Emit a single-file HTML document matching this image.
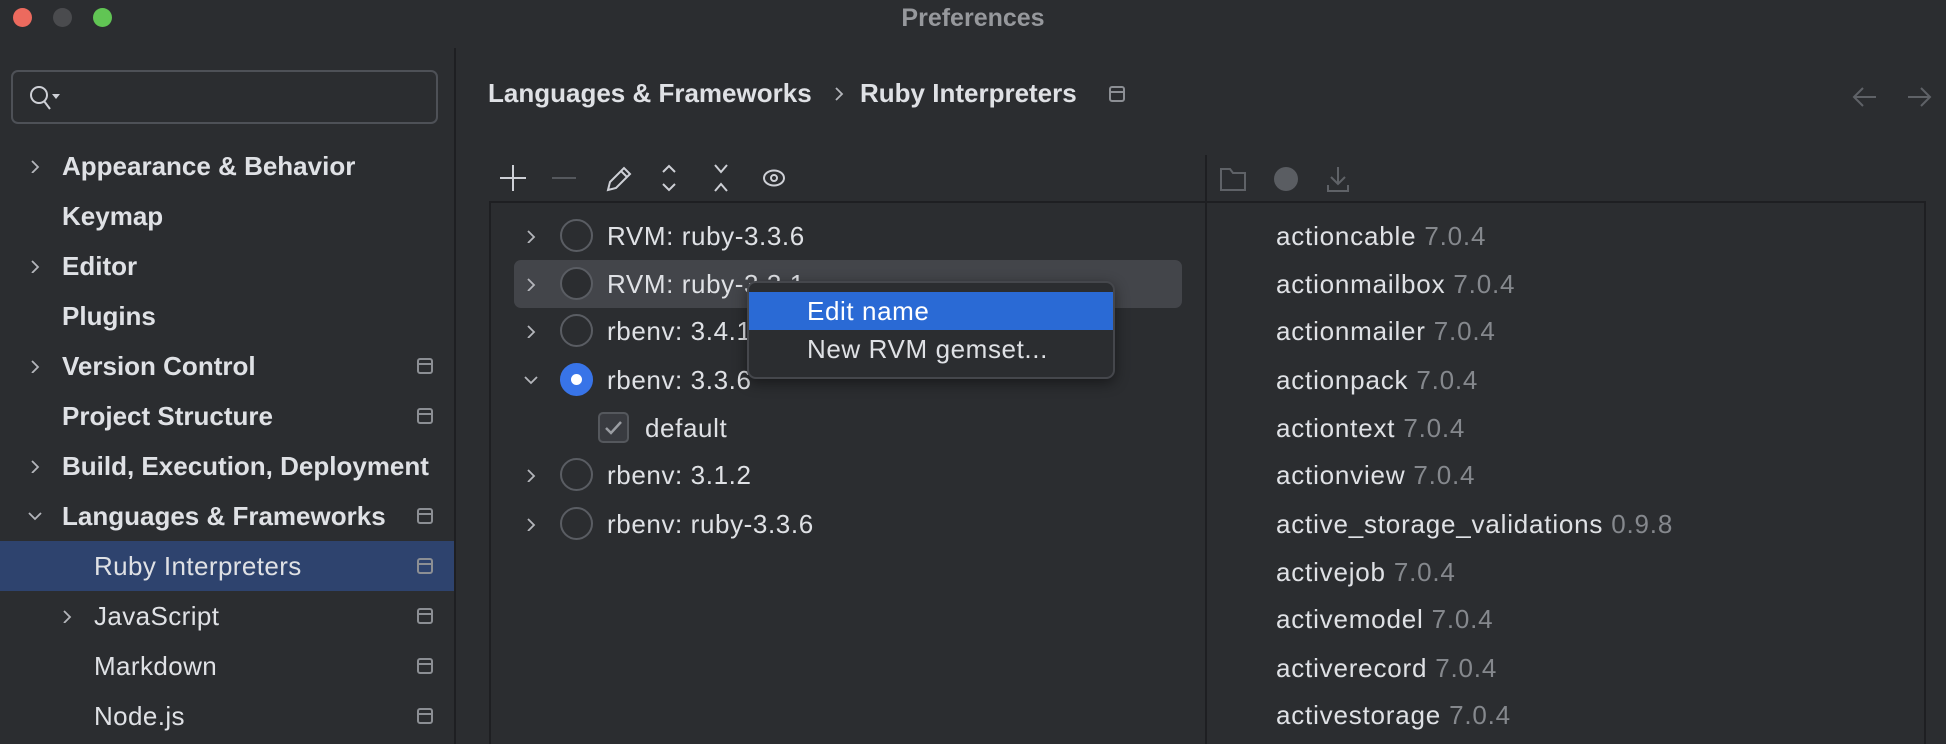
<!DOCTYPE html>
<html><head><meta charset="utf-8"><style>
*{margin:0;padding:0;box-sizing:border-box}
body{width:1946px;height:744px;background:#2b2d30;overflow:hidden;position:relative;font-family:"Liberation Sans",sans-serif;color:#dfe1e5}
.a{position:absolute}
.tl{width:19px;height:19px;border-radius:50%;top:8px}
.side{font-weight:bold;font-size:26px;line-height:50px;height:50px;left:0;width:454px}
.side span{position:absolute;left:62px;white-space:nowrap}
.side.in span{left:94px;font-weight:normal;letter-spacing:0.4px}
.chev{position:absolute;width:14px;height:14px}
.cfg{position:absolute;left:417px;top:17px;width:16px;height:16px;border:2px solid #8c8f94;border-radius:3px}
.cfg:after{content:"";position:absolute;left:0;right:0;top:3px;border-top:2px solid #8c8f94}
.row{font-size:26px;height:48px;line-height:48px;white-space:nowrap;letter-spacing:0.6px}
.circ{position:absolute;width:33px;height:33px;border-radius:50%;border:2px solid #5a5d63;top:7px}
.gem{left:1276px;font-size:26px;line-height:48px;height:48px;white-space:nowrap;letter-spacing:0.8px}
.gem i{font-style:normal;color:#85888d}
</style></head><body>
<div class="a tl" style="left:13px;background:#ec6a5e"></div>
<div class="a tl" style="left:53px;background:#4a4b4e"></div>
<div class="a tl" style="left:93px;background:#61c554"></div>
<div class="a" style="left:0;width:1946px;top:4px;text-align:center;font-weight:bold;font-size:25px;color:#96989c">Preferences</div>

<div class="a" style="left:454px;top:48px;width:2px;height:696px;background:#1e1f22"></div>
<div class="a" style="left:11px;top:70px;width:427px;height:54px;border:2px solid #4e5157;border-radius:7px"></div>
<svg class="a" style="left:28px;top:84px" width="36" height="28"><circle cx="11" cy="11" r="8" fill="none" stroke="#ced0d6" stroke-width="2"/><line x1="16" y1="17" x2="22" y2="25" stroke="#ced0d6" stroke-width="2"/><path d="M24 10h8l-4 5z" fill="#ced0d6"/></svg>

<div class="a" style="left:0;top:541px;width:454px;height:50px;background:#2e436e"></div>
<svg width="0" height="0"><defs><path id="cr" d="M4 2l6 6-6 6" fill="none" stroke="#b4b6bb" stroke-width="1.8"/><path id="cd" d="M1 4l6 6 6-6" fill="none" stroke="#b4b6bb" stroke-width="1.8"/></defs></svg>

<div class="a side" style="top:141px"><svg class="chev" style="left:28px;top:18px"><use href="#cr"/></svg><span>Appearance &amp; Behavior</span></div>
<div class="a side" style="top:191px"><span>Keymap</span></div>
<div class="a side" style="top:241px"><svg class="chev" style="left:28px;top:18px"><use href="#cr"/></svg><span>Editor</span></div>
<div class="a side" style="top:291px"><span>Plugins</span></div>
<div class="a side" style="top:341px"><svg class="chev" style="left:28px;top:18px"><use href="#cr"/></svg><span>Version Control</span><div class="cfg"></div></div>
<div class="a side" style="top:391px"><span>Project Structure</span><div class="cfg"></div></div>
<div class="a side" style="top:441px"><svg class="chev" style="left:28px;top:18px"><use href="#cr"/></svg><span>Build, Execution, Deployment</span></div>
<div class="a side" style="top:491px"><svg class="chev" style="left:28px;top:18px"><use href="#cd"/></svg><span>Languages &amp; Frameworks</span><div class="cfg"></div></div>
<div class="a side in" style="top:541px"><span>Ruby Interpreters</span><div class="cfg"></div></div>
<div class="a side in" style="top:591px"><svg class="chev" style="left:60px;top:18px"><use href="#cr"/></svg><span>JavaScript</span><div class="cfg"></div></div>
<div class="a side in" style="top:641px"><span>Markdown</span><div class="cfg"></div></div>
<div class="a side in" style="top:691px"><span>Node.js</span><div class="cfg"></div></div>

<div class="a" style="left:488px;top:78px;font-weight:bold;font-size:26px;white-space:nowrap">Languages &amp; Frameworks</div>
<svg class="a" style="left:832px;top:86px" width="14" height="16"><path d="M4 2l6 6-6 6" fill="none" stroke="#b4b6bb" stroke-width="1.8"/></svg>
<div class="a" style="left:860px;top:78px;font-weight:bold;font-size:26px;white-space:nowrap">Ruby Interpreters</div>
<div class="a" style="left:1109px;top:86px;width:16px;height:16px;border:2px solid #8c8f94;border-radius:3px"><div style="border-top:2px solid #8c8f94;margin-top:3px"></div></div>
<svg class="a" style="left:1852px;top:86px" width="80" height="22" fill="none" stroke="#5f6267" stroke-width="2"><path d="M2 11h22M11 2l-9 9 9 9"/><path d="M56 11h22M69 2l9 9-9 9"/></svg>

<svg class="a" style="left:496px;top:160px" width="300" height="36" fill="none" stroke="#ced0d6" stroke-width="2">
<path d="M17 5v26M4 18h26"/>
<path d="M56 18h24" stroke="#55585d"/>
<path d="M112 30l2-8 14-14 6 6-14 14z M125 11l6 6"/>
<path d="M167 12l6-6 6 6M167 24l6 6 6-6"/>
<path d="M219 5l6 7 6-7M219 31l6-7 6 7"/>
<ellipse cx="278" cy="18" rx="10" ry="7.5"/><circle cx="278" cy="18" r="3"/>
</svg>

<div class="a" style="left:489px;top:201px;width:1437px;height:543px;border:2px solid #1e1f22;border-bottom:none"></div>
<div class="a" style="left:1205px;top:155px;width:2px;height:589px;background:#1e1f22"></div>
<svg class="a" style="left:1218px;top:163px" width="150" height="32" fill="none" stroke="#5f6267" stroke-width="2">
<path d="M3 6h9l3 4h12v17H3z"/>
<circle cx="68" cy="16" r="12" fill="#5a5d62" stroke="none"/>
<path d="M120 4v17M113 14l7 7 7-7M110 22v6h20v-6"/>
</svg>

<div class="a" style="left:514px;top:260px;width:668px;height:48px;background:#43454a;border-radius:7px"></div>

<div class="a row" style="left:500px;top:212px;width:500px"><svg class="chev" style="left:24px;top:17px"><use href="#cr"/></svg><div class="circ" style="left:60px"></div><span class="a" style="left:107px">RVM: ruby-3.3.6</span></div>
<div class="a row" style="left:500px;top:260px;width:500px"><svg class="chev" style="left:24px;top:17px"><use href="#cr"/></svg><div class="circ" style="left:60px;background:#2b2d30"></div><span class="a" style="left:107px">RVM: ruby-3.3.1</span></div>
<div class="a row" style="left:500px;top:307px;width:500px"><svg class="chev" style="left:24px;top:17px"><use href="#cr"/></svg><div class="circ" style="left:60px"></div><span class="a" style="left:107px">rbenv: 3.4.1</span></div>
<div class="a row" style="left:500px;top:356px;width:500px"><svg class="chev" style="left:24px;top:17px"><use href="#cd"/></svg><div class="circ" style="left:60px;background:#3874e8;border-color:#3874e8"><div style="width:11px;height:11px;background:#fff;border-radius:50%;margin:9px"></div></div><span class="a" style="left:107px">rbenv: 3.3.6</span></div>
<div class="a row" style="left:500px;top:404px;width:500px"><div class="a" style="left:98px;top:8px;width:31px;height:31px;border:2px solid #55585d;border-radius:5px;background:#393b40"><svg width="27" height="27" style="display:block"><path d="M6 14l5 5 10-11" fill="none" stroke="#9a9da2" stroke-width="2.5"/></svg></div><span class="a" style="left:145px">default</span></div>
<div class="a row" style="left:500px;top:451px;width:500px"><svg class="chev" style="left:24px;top:17px"><use href="#cr"/></svg><div class="circ" style="left:60px"></div><span class="a" style="left:107px">rbenv: 3.1.2</span></div>
<div class="a row" style="left:500px;top:500px;width:500px"><svg class="chev" style="left:24px;top:17px"><use href="#cr"/></svg><div class="circ" style="left:60px"></div><span class="a" style="left:107px">rbenv: ruby-3.3.6</span></div>

<div class="a" style="left:747px;top:281px;width:368px;height:98px;background:#2b2d30;border:2px solid #45474c;border-radius:9px;box-shadow:0 4px 14px rgba(0,0,0,.45)"></div>
<div class="a" style="left:749px;top:292px;width:364px;height:38px;background:#2a6ad5"></div>
<div class="a" style="left:807px;top:292px;font-size:26px;line-height:38px;color:#fff;letter-spacing:0.6px">Edit name</div>
<div class="a" style="left:807px;top:330px;font-size:26px;line-height:38px;letter-spacing:0.6px">New RVM gemset...</div>

<div class="a gem" style="top:212px">actioncable <i>7.0.4</i></div>
<div class="a gem" style="top:260px">actionmailbox <i>7.0.4</i></div>
<div class="a gem" style="top:307px">actionmailer <i>7.0.4</i></div>
<div class="a gem" style="top:356px">actionpack <i>7.0.4</i></div>
<div class="a gem" style="top:404px">actiontext <i>7.0.4</i></div>
<div class="a gem" style="top:451px">actionview <i>7.0.4</i></div>
<div class="a gem" style="top:500px">active_storage_validations <i>0.9.8</i></div>
<div class="a gem" style="top:548px">activejob <i>7.0.4</i></div>
<div class="a gem" style="top:595px">activemodel <i>7.0.4</i></div>
<div class="a gem" style="top:644px">activerecord <i>7.0.4</i></div>
<div class="a gem" style="top:691px">activestorage <i>7.0.4</i></div>
</body></html>
